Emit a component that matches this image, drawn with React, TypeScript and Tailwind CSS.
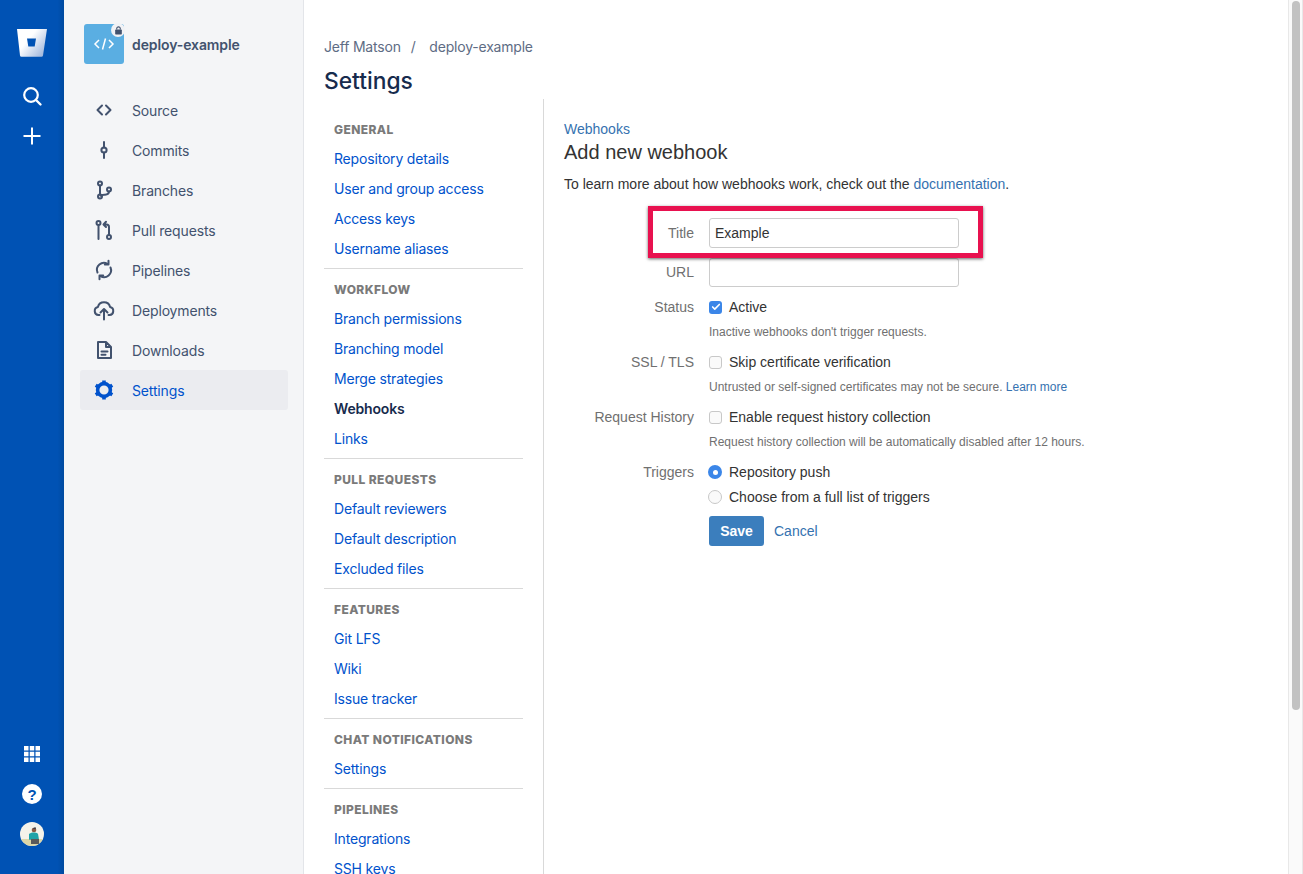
import { ReactNode } from "react";
import { Check } from "lucide-react";

const inter = "font-['Inter','Noto_Sans',sans-serif]";
const arial = "font-['Liberation_Sans',Arial,sans-serif]";

const Icon = ({ children, className = "" }: { children: ReactNode; className?: string }) => (
  <svg
    viewBox="0 0 24 24"
    fill="none"
    stroke="currentColor"
    strokeWidth="2"
    strokeLinecap="round"
    strokeLinejoin="round"
    className={`w-6 h-6 ${className}`}
  >
    {children}
  </svg>
);

const repoNav: { label: string; icon: ReactNode; active?: boolean }[] = [
  { label: "Source", icon: <path d="M10 7.500 5.500 12l4.500 4.500M14 7.500l4.500 4.500-4.500 4.500" /> },
  {
    label: "Commits",
    icon: (
      <>
        <circle cx="12" cy="12" r="2.600" />
        <path d="M12 4v5.400M12 14.600V20" />
      </>
    ),
  },
  {
    label: "Branches",
    icon: (
      <>
        <circle cx="8" cy="5.500" r="2" />
        <circle cx="8" cy="18.500" r="2" />
        <circle cx="17" cy="11.500" r="2" />
        <path d="M8 7.500v9M17 13.500c0 2.500-2 3-4 3.200-2 .2-4 .3-4.500 1" />
      </>
    ),
  },
  {
    label: "Pull requests",
    icon: (
      <>
        <circle cx="6.500" cy="5" r="2" />
        <circle cx="17" cy="19" r="2" />
        <path d="M6.500 7v14M17 17v-8c0-1.500-.8-2.500-2.500-2.500H12M14 3.800 11.500 6.500 14 9" />
      </>
    ),
  },
  {
    label: "Pipelines",
    icon: (
      <>
        <path d="M5.500 14.500A7 7 0 0 1 15.500 5.800M18.500 9.500a7 7 0 0 1-10 8.700" />
        <path d="M16.500 2.800v3.700h-3.700M7.500 21.200v-3.700h3.700" />
      </>
    ),
  },
  {
    label: "Deployments",
    icon: (
      <>
        <path d="M7.500 17H6.500a4 4 0 0 1-.6-7.900 6.300 6.300 0 0 1 12.200 0 4 4 0 0 1-.6 7.900h-1" />
        <path d="M12 21.500V11.500M8.500 14.500 12 11l3.500 3.500" />
      </>
    ),
  },
  {
    label: "Downloads",
    icon: (
      <>
        <path d="M6 4h8l5 5v11H6zM14 4v5h5" />
        <path d="M9.500 13.500h6M9.500 16.800h4" />
      </>
    ),
  },
  {
    label: "Settings",
    active: true,
    icon: (
      <>
        <circle cx="12" cy="12" r="6.400" strokeWidth="3.600" />
        <path
          strokeWidth="3.600"
          strokeLinecap="butt"
          d="M12 2.400v2.800M12 18.800v2.800M3.700 7.200l2.400 1.400M17.900 15.400l2.400 1.400M3.700 16.800l2.400-1.400M17.900 8.600l2.400-1.400"
        />
      </>
    ),
  },
];

const settingsNav: { heading: string; links: { label: string; current?: boolean }[] }[] = [
  {
    heading: "GENERAL",
    links: [
      { label: "Repository details" },
      { label: "User and group access" },
      { label: "Access keys" },
      { label: "Username aliases" },
    ],
  },
  {
    heading: "WORKFLOW",
    links: [
      { label: "Branch permissions" },
      { label: "Branching model" },
      { label: "Merge strategies" },
      { label: "Webhooks", current: true },
      { label: "Links" },
    ],
  },
  {
    heading: "PULL REQUESTS",
    links: [{ label: "Default reviewers" }, { label: "Default description" }, { label: "Excluded files" }],
  },
  { heading: "FEATURES", links: [{ label: "Git LFS" }, { label: "Wiki" }, { label: "Issue tracker" }] },
  { heading: "CHAT NOTIFICATIONS", links: [{ label: "Settings" }] },
  { heading: "PIPELINES", links: [{ label: "Integrations" }, { label: "SSH keys" }] },
];

const Rail = () => (
  <div className="w-16 shrink-0 h-full flex flex-col justify-between items-center bg-[linear-gradient(90deg,#0052b4_90%,#004a9f_100%)] text-white">
    <div className="flex flex-col items-center">
      <svg viewBox="0 0 32 28" className="w-8 h-7 mt-[29px]">
        <defs>
          <linearGradient id="bucket" x1="0.4" y1="0.35" x2="1" y2="0.8">
            <stop offset="0" stopColor="#ffffff" />
            <stop offset="1" stopColor="#9fb6dc" />
          </linearGradient>
        </defs>
        <path
          fill="url(#bucket)"
          fillRule="evenodd"
          d="M1 0h30l-4 26.500a1.500 1.500 0 0 1-1.500 1.200H5.500A1.500 1.500 0 0 1 4 26.500zM11 9.500l1.300 8h6.400l1.300-8z"
        />
      </svg>
      <Icon className="mt-[27px]">
        <circle cx="11" cy="11" r="6.800" strokeWidth="2.200" />
        <path d="m16 16 4.500 4.500" strokeWidth="2.400" />
      </Icon>
      <Icon className="mt-4">
        <path d="M12 3.500v17M3.500 12h17" strokeWidth="2" strokeLinecap="butt" />
      </Icon>
    </div>
    <div className="flex flex-col items-center mb-7">
      <svg viewBox="0 0 16 16" className="w-4 h-4 fill-white">
        <path d="M0 0h4.500v4.500H0zM5.750 0h4.500v4.500h-4.500zM11.500 0H16v4.500h-4.500zM0 5.750h4.500v4.500H0zM5.750 5.750h4.500v4.500h-4.500zM11.500 5.750H16v4.500h-4.500zM0 11.500h4.500V16H0zM5.750 11.500h4.500V16h-4.500zM11.500 11.500H16V16h-4.500z" />
      </svg>
      <div className="mt-[22px] w-5 h-5 rounded-full bg-white flex items-center justify-center text-[#0052b4] text-[15px] font-extrabold leading-none font-['Liberation_Sans',sans-serif]">
        ?
      </div>
      <svg viewBox="0 0 24 24" className="mt-[18px] w-6 h-6 rounded-full">
        <rect width="24" height="24" fill="#f5f3ea" />
        <rect y="17" width="24" height="7" fill="#dcd6a8" />
        <circle cx="14" cy="8" r="2.300" fill="#8a5a44" />
        <path d="M14 5.400h2v1.400h-3z" fill="#333a44" />
        <path d="M9 12c1.500-2 7-2.200 9-.2l1 6H9z" fill="#1fa3a8" />
        <rect x="11" y="17" width="8" height="5" fill="#5a5a5a" />
      </svg>
    </div>
  </div>
);

const RepoSidebar = () => (
  <aside className={`w-60 shrink-0 h-full bg-[#f4f5f7] border-r border-[#e3e5e9] pl-4 pr-[15px] ${inter}`}>
    <div className="flex items-center pt-6 pl-1">
      <div className="relative w-10 h-10 rounded-[3px] bg-[#5aaee2] flex items-center justify-center text-white">
        <svg viewBox="0 0 24 24" fill="none" stroke="currentColor" strokeWidth="1.500" className="w-6 h-6">
          <path d="m7 8-4 4 4 4M17 8l4 4-4 4M13.500 6.500l-3 11" />
        </svg>
        <div className="absolute -top-[1px] -right-[1px] w-[14px] h-[14px] rounded-full bg-[#f1f2f5] flex items-center justify-center">
          <svg viewBox="0 0 10 10" className="w-[9px] h-[9px] fill-[#42526e]">
            <path d="M2 4h6a.7.7 0 0 1 .7.700v4a.7.7 0 0 1-.7.700H2a.7.7 0 0 1-.7-.7v-4A.7.7 0 0 1 2 4z" />
            <path d="M3 4V3a2 2 0 0 1 4 0v1" fill="none" stroke="#42526e" strokeWidth="1.200" />
          </svg>
        </div>
      </div>
      <span className="ml-2 pt-0.5 text-sm font-semibold tracking-[-0.1px] text-[#42526e]">deploy-example</span>
    </div>
    <nav className="mt-[26px]">
      {repoNav.map((item) => (
        <a
          key={item.label}
          className={`h-10 flex items-center rounded-[3px] pl-3 gap-4 text-sm tracking-[-0.15px] ${
            item.active ? "bg-[#ebecf0] text-[#0052cc]" : "text-[#42526e]"
          }`}
        >
          <Icon>{item.icon}</Icon>
          <span className="pt-0.5">{item.label}</span>
        </a>
      ))}
    </nav>
  </aside>
);

const SettingsMenu = () => (
  <div className={`w-[219px] shrink-0 pr-5 pt-[15px] ${inter}`}>
    {settingsNav.map((group, i) => (
      <div key={group.heading} className={i < settingsNav.length - 1 ? "pb-1 mb-[5px] border-b border-[#d9d9d9]" : ""}>
        <div className="h-[30px] flex items-center pl-[10px] pt-0.5 text-xs font-extrabold tracking-[0.4px] text-[#7a7a7a]">
          {group.heading}
        </div>
        {group.links.map((link) => (
          <a
            key={link.label}
            className={`h-[30px] flex items-center pl-[10px] text-sm tracking-[-0.18px] ${
              link.current ? "font-semibold text-[#172b4d]" : "text-[#0052cc]"
            }`}
          >
            {link.label}
          </a>
        ))}
      </div>
    ))}
  </div>
);

const Label = ({ children, className = "" }: { children: ReactNode; className?: string }) => (
  <label className={`w-[130px] shrink-0 mr-[15px] text-right text-sm text-[#707070] ${className}`}>{children}</label>
);

const TextInput = ({ value = "" }: { value?: string }) => (
  <div className="w-[250px] h-full px-[5px] flex items-center rounded-[3px] border border-[#cccccc] bg-white text-sm text-[#333333]">
    {value}
  </div>
);

const Box = ({ checked = false }: { checked?: boolean }) =>
  checked ? (
    <span className="w-[13px] h-[13px] rounded-[3px] bg-[#3b86e8] flex items-center justify-center text-white">
      <Check className="w-[10px] h-[10px]" strokeWidth={4} />
    </span>
  ) : (
    <span className="w-[13px] h-[13px] rounded-[3px] border border-[#c8c8c8] bg-[#fafafa]" />
  );

const Radio = ({ checked = false }: { checked?: boolean }) =>
  checked ? (
    <span className="w-[14px] h-[14px] -ml-px rounded-full bg-[#3b86e8] flex items-center justify-center">
      <span className="w-[5px] h-[5px] rounded-full bg-white" />
    </span>
  ) : (
    <span className="w-[14px] h-[14px] -ml-px rounded-full border border-[#c8c8c8] bg-[#fafafa]" />
  );

const Option = ({
  label,
  control,
  children,
  className = "",
}: {
  label?: string;
  control: ReactNode;
  children: ReactNode;
  className?: string;
}) => (
  <div className={`h-5 flex items-center ${className}`}>
    <Label>{label}</Label>
    {control}
    <span className="ml-[7px] text-sm text-[#333333]">{children}</span>
  </div>
);

const Help = ({ children }: { children: ReactNode }) => (
  <p className="ml-[145px] mt-[7px] h-4 leading-4 text-xs text-[#707070]">{children}</p>
);

const WebhookForm = () => (
  <div className={`flex-1 pl-5 pt-[21px] ${arial}`}>
    <a className="block h-[18px] leading-[18px] text-sm text-[#3572b0]">Webhooks</a>
    <h2 className="h-7 leading-7 text-xl text-[#333333]">Add new webhook</h2>
    <p className="mt-[8px] h-5 leading-5 text-sm text-[#333333]">
      To learn more about how webhooks work, check out the <a className="text-[#3572b0]">documentation</a>.
    </p>
    <form className="relative mt-6">
      <div className="h-[30px] flex items-center">
        <Label>Title</Label>
        <TextInput value="Example" />
      </div>
      <div className="mt-[10px] h-[29px] flex items-center">
        <Label className="pb-0.5">URL</Label>
        <TextInput />
      </div>
      <Option label="Status" control={<Box checked />} className="mt-[10px]">
        Active
      </Option>
      <Help>Inactive webhooks don't trigger requests.</Help>
      <Option label="SSL / TLS" control={<Box />} className="mt-[12px]">
        Skip certificate verification
      </Option>
      <Help>
        Untrusted or self-signed certificates may not be secure. <a className="text-[#3572b0]">Learn more</a>
      </Help>
      <Option label="Request History" control={<Box />} className="mt-[12px]">
        Enable request history collection
      </Option>
      <Help>Request history collection will be automatically disabled after 12 hours.</Help>
      <Option label="Triggers" control={<Radio checked />} className="mt-[12px]">
        Repository push
      </Option>
      <Option control={<Radio />} className="mt-[5px]">
        Choose from a full list of triggers
      </Option>
      <div className="ml-[145px] mt-[9px] flex items-center">
        <button type="button" className="w-[55px] h-[30px] rounded-[3px] bg-[#3b7ebd] text-sm font-bold text-white">
          Save
        </button>
        <a className="ml-[10px] text-sm text-[#3572b0]">Cancel</a>
      </div>
      {/* red annotation drawn over the screenshot */}
      <div className="absolute left-[84px] -top-3 w-[335px] h-[52px] border-[5px] border-[#e8114f] shadow-[0_1px_3px_rgba(0,0,0,0.6)]" />
    </form>
  </div>
);

const Scrollbar = () => (
  <div className="w-[15px] shrink-0 h-full bg-[#fafafa] border-l border-r border-[#e8e8e8] flex justify-center pt-px">
    <div className="w-2 h-[709px] rounded-full bg-[#c2c2c2]" />
  </div>
);

export default function App() {
  return (
    <div className="flex w-full h-[874px] overflow-hidden bg-white">
      <Rail />
      <RepoSidebar />
      <main className="flex-1 min-w-0 h-full overflow-hidden pl-5 pt-[37px]">
        <div className={`h-5 leading-5 text-sm tracking-[-0.2px] text-[#5e6c84] ${inter}`}>
          Jeff Matson<span className="mx-[10px]">/</span> deploy-example
        </div>
        <h1 className={`mt-2 h-8 leading-8 text-[22.800px] font-medium text-[#172b4d] ${inter}`}>Settings</h1>
        <div className="flex mt-[2px] h-[800px]">
          <SettingsMenu />
          <div className="w-px bg-[#d9d9d9]" />
          <WebhookForm />
        </div>
      </main>
      <Scrollbar />
    </div>
  );
}
